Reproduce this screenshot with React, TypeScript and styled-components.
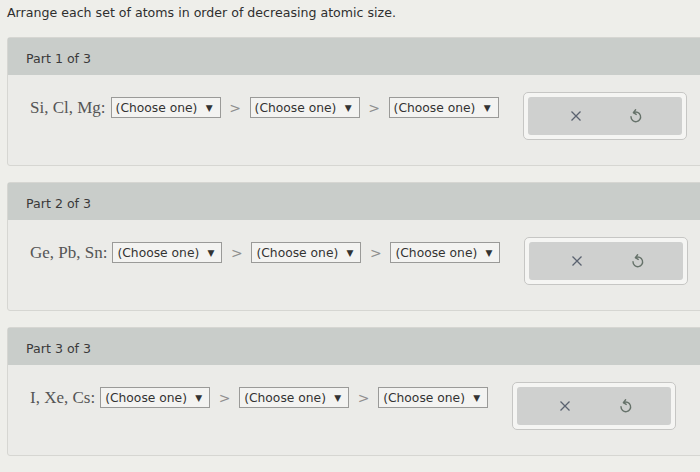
import React from "react";
import styled, { createGlobalStyle } from "styled-components";

const Global = createGlobalStyle`
  html, body { margin: 0; padding: 0; }
  body {
    background: #eeeeea;
    font-family: "DejaVu Sans", Verdana, sans-serif;
    width: 700px;
    height: 472px;
    overflow: hidden;
  }
`;

const Page = styled.div`
  padding: 6px 0 0 7px;
`;

const Prompt = styled.div`
  font-size: 12.6px;
  line-height: 14px;
  color: #2f2f2f;
`;

const Section = styled.section<{ $first?: boolean }>`
  margin-top: ${(p) => (p.$first ? "17px" : "16px")};
  margin-right: -12px;
  border: 1px solid #d6d6d2;
  border-radius: 3px;
  background: #ebebe8;
`;

const Header = styled.div`
  height: 37px;
  background: #c9cdca;
  display: flex;
  align-items: center;
  padding: 4px 0 0 18px;
  box-sizing: border-box;
  font-size: 12.6px;
  color: #3a3a3a;
`;

const Body = styled.div`
  height: 90px;
  display: flex;
  align-items: flex-start;
  padding: 17px 0 0 22px;
  box-sizing: border-box;
`;

const Question = styled.div`
  display: flex;
  align-items: center;
  margin-top: 5px;
`;

const Label = styled.span`
  font-family: "Liberation Serif", "Times New Roman", serif;
  font-size: 17px;
  color: #555;
  margin-right: 5px;
`;

const Select = styled.div`
  height: 21px;
  width: 110px;
  box-sizing: border-box;
  border: 1px solid #9a9a98;
  background: #f3f3f1;
  display: flex;
  align-items: center;
  justify-content: space-between;
  padding: 0 7px 0 4px;
  font-size: 12.3px;
  color: #333;
`;

const Arrow = styled.span`
  font-size: 9px;
  color: #333;
`;

const Gt = styled.span`
  font-size: 14px;
  color: #8f8f8f;
  width: 29px;
  text-align: center;
`;

const Tools = styled.div`
  margin-left: 24px;
  width: 164px;
  height: 48px;
  box-sizing: border-box;
  border: 1px solid #c6c6c4;
  border-radius: 5px;
  background: #f5f5f3;
  padding: 4px;
`;

const ToolInner = styled.div`
  height: 100%;
  border-radius: 3px;
  background: #cfd0cf;
  display: flex;
  align-items: center;
  justify-content: space-around;
  padding: 0 16px 0 18px;
`;

const IconBtn = styled.span`
  display: flex;
  align-items: center;
  justify-content: center;
  width: 20px;
  height: 20px;
`;

const CloseIcon = () => (
  <svg width="12" height="12" viewBox="0 0 12 12">
    <path d="M1.5 1.5 L10.5 10.5 M10.5 1.5 L1.5 10.5" stroke="#5a6270" strokeWidth="1.3" fill="none" />
  </svg>
);

const UndoIcon = () => (
  <svg width="13" height="16" viewBox="0 0 13 16">
    <path
      d="M4.6 4.6 A4.8 4.8 0 1 1 2 8.8"
      stroke="#66726a"
      strokeWidth="1.4"
      fill="none"
      strokeLinecap="round"
    />
    <path d="M6.6 1.8 L4.4 4.6 L7.2 6.4" stroke="#66726a" strokeWidth="1.4" fill="none" strokeLinecap="round" strokeLinejoin="round" />
  </svg>
);

const parts = [
  { n: 1, atoms: "Si, Cl, Mg:" },
  { n: 2, atoms: "Ge, Pb, Sn:" },
  { n: 3, atoms: "I, Xe, Cs:" },
];

const Choose = () => (
  <Select>
    <span>(Choose one)</span>
    <Arrow>▼</Arrow>
  </Select>
);

export default function App() {
  return (
    <>
      <Global />
      <Page>
        <Prompt>Arrange each set of atoms in order of decreasing atomic size.</Prompt>
        {parts.map((p) => (
          <Section key={p.n} $first={p.n === 1}>
            <Header>Part {p.n} of 3</Header>
            <Body>
              <Question>
                <Label>{p.atoms}</Label>
                <Choose />
                <Gt>&gt;</Gt>
                <Choose />
                <Gt>&gt;</Gt>
                <Choose />
              </Question>
              <Tools>
                <ToolInner>
                  <IconBtn>
                    <CloseIcon />
                  </IconBtn>
                  <IconBtn>
                    <UndoIcon />
                  </IconBtn>
                </ToolInner>
              </Tools>
            </Body>
          </Section>
        ))}
      </Page>
    </>
  );
}
